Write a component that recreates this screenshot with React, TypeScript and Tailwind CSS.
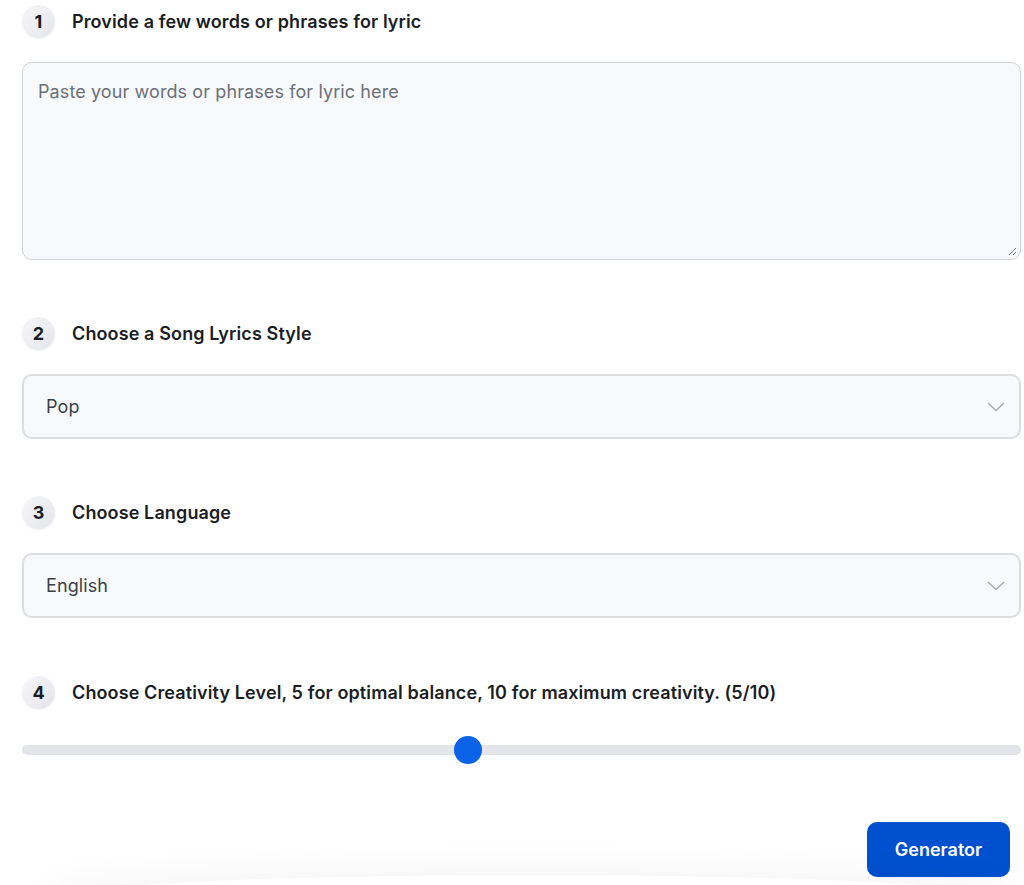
import React from "react";

function Step({ n, title }: { n: number; title: string }) {
  return (
    <div className="flex items-center h-[33px]">
      <div className="w-[33px] h-[33px] rounded-full bg-gradient-to-br from-[#f7f7f9] to-[#e4e5ea] shadow-[0_1px_2px_rgba(0,0,0,0.06)] flex items-center justify-center text-[18px] font-bold text-[#1a1d24]">
        {n}
      </div>
      <div className="ml-[17px] text-[18px] font-semibold text-[#1a1d24] tracking-[0.12px]">{title}</div>
    </div>
  );
}

function Select({ value }: { value: string }) {
  return (
    <div className="h-[65px] rounded-[10px] border-2 border-[#dcdee2] bg-[#f8f9fa] flex items-center justify-between pl-[22px] pr-[14px]">
      <span className="text-[18px] text-[#3b3f46] tracking-[0.1px]">{value}</span>
      <svg width="18" height="10" viewBox="0 0 18 10" fill="none">
        <path d="M1.5 1.5 L9 8.5 L16.5 1.5" stroke="#a7abb1" strokeWidth="1.4" strokeLinecap="round" strokeLinejoin="round" />
      </svg>
    </div>
  );
}

export default function App() {
  return (
    <div className="w-[1024px] h-[885px] bg-white overflow-hidden relative" style={{ fontFamily: "Inter, Roboto, 'Liberation Sans', sans-serif" }}>
      <div className="pl-[22px] pr-[3px] pt-[5px]">
        <Step n={1} title="Provide a few words or phrases for lyric" />
        <div className="mt-[24px] h-[198px] rounded-[10px] border border-[#cfd2d7] bg-[#f8f9fa] relative px-[15px] pt-[15px]">
          <span className="text-[18px] text-[#6b7079] tracking-[0.1px]">Paste your words or phrases for lyric here</span>
          <svg className="absolute right-[3px] bottom-[3px]" width="9" height="9" viewBox="0 0 9 9">
            <path d="M8 1 L1 8 M8 5 L5 8" stroke="#7d8188" strokeWidth="1" />
          </svg>
        </div>

        <div className="mt-[57px]">
          <Step n={2} title="Choose a Song Lyrics Style" />
        </div>
        <div className="mt-[24px]">
          <Select value="Pop" />
        </div>

        <div className="mt-[57px]">
          <Step n={3} title="Choose Language" />
        </div>
        <div className="mt-[24px]">
          <Select value="English" />
        </div>

        <div className="mt-[58px]">
          <Step n={4} title="Choose Creativity Level, 5 for optimal balance, 10 for maximum creativity. (5/10)" />
        </div>
        <div className="mt-[27px] h-[28px] relative flex items-center">
          <div className="w-full h-[10px] rounded-full bg-[#e4e5ea]" />
          <div className="absolute left-[432px] top-0 w-[28px] h-[28px] rounded-full bg-[#0a62e6]" />
        </div>

        <div className="mt-[58px] flex justify-end pr-[11px]">
          <button className="w-[143px] h-[55px] rounded-[10px] bg-[#0050d0] text-white text-[18px] font-semibold">
            Generator
          </button>
        </div>
      </div>
      <div className="absolute left-[40px] right-0 bottom-[-40px] h-[50px] rounded-[50%] shadow-[0_-10px_30px_rgba(0,0,0,0.04)]" />
    </div>
  );
}
